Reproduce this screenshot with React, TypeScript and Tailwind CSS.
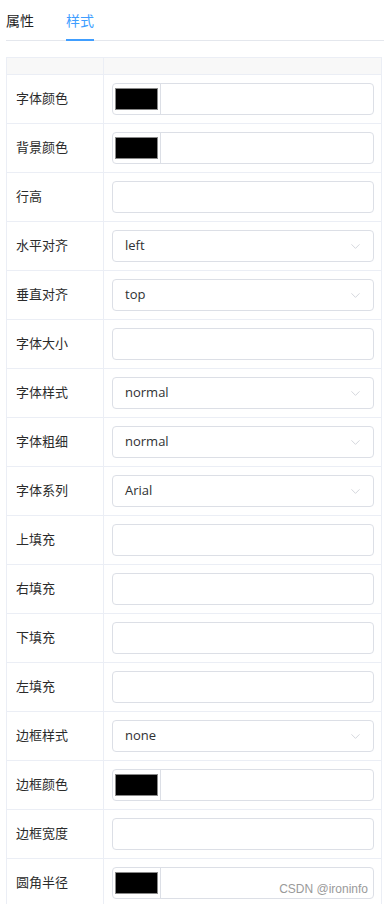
import { ChevronDown } from 'lucide-react'

// ─── Types ────────────────────────────────────────────────────────────────────

type Field =
  | { label: string; kind: 'color' }
  | { label: string; kind: 'text' }
  | { label: string; kind: 'select'; value: string }

// ─── Field definitions ────────────────────────────────────────────────────────

const FIELDS: Field[] = [
  { label: '字体颜色', kind: 'color' },
  { label: '背景颜色', kind: 'color' },
  { label: '行高', kind: 'text' },
  { label: '水平对齐', kind: 'select', value: 'left' },
  { label: '垂直对齐', kind: 'select', value: 'top' },
  { label: '字体大小', kind: 'text' },
  { label: '字体样式', kind: 'select', value: 'normal' },
  { label: '字体粗细', kind: 'select', value: 'normal' },
  { label: '字体系列', kind: 'select', value: 'Arial' },
  { label: '上填充', kind: 'text' },
  { label: '右填充', kind: 'text' },
  { label: '下填充', kind: 'text' },
  { label: '左填充', kind: 'text' },
  { label: '边框样式', kind: 'select', value: 'none' },
  { label: '边框颜色', kind: 'color' },
  { label: '边框宽度', kind: 'text' },
  { label: '圆角半径', kind: 'color' },
]

const FONT = { fontFamily: '"Open Sans", "Noto Sans CJK SC", sans-serif' }

// ─── Inputs ───────────────────────────────────────────────────────────────────

function FieldInput({ field }: { field: Field }) {
  const box = 'h-8 w-full rounded-[4px] border border-[#dcdfe6] bg-white'

  if (field.kind === 'color') {
    return (
      <div className={`${box} flex items-center`}>
        <div className="ml-[2px] h-[22px] w-[43px] border border-[#888] bg-black" />
        <div className="ml-[2px] h-full w-px bg-[#dcdfe6]" />
      </div>
    )
  }

  if (field.kind === 'select') {
    return (
      <div className={`${box} flex items-center justify-between pl-3 pr-[10px]`}>
        <span className="text-[13px] text-[#303133]">{field.value}</span>
        <ChevronDown size={15} strokeWidth={1.1} className="text-[#c0c4cc]" />
      </div>
    )
  }

  return <div className={box} />
}

// ─── App ──────────────────────────────────────────────────────────────────────

export default function App() {
  return (
    <div className="relative h-[904px] w-[384px] overflow-hidden bg-white" style={FONT}>
      {/* Tabs */}
      <div className="ml-[6px] flex h-[41px] gap-8 border-b border-[#e4e7ed] text-[14px]">
        <div className="flex items-center text-[#222]">属性</div>
        <div className="relative flex items-center text-[#409eff]">
          样式
          <div className="absolute right-0 bottom-[-1px] left-0 h-[2px] bg-[#409eff]" />
        </div>
      </div>

      {/* Table */}
      <div className="mt-4 ml-[6px] w-[376px] border border-[#ebeef5]">
        <div className="grid h-[17px] grid-cols-[97px_1fr] border-b border-[#ebeef5] bg-[#f8f8f8]">
          <div className="border-r border-[#ebeef5]" />
          <div />
        </div>
        {FIELDS.map((f) => (
          <div key={f.label} className="grid h-[49px] grid-cols-[97px_1fr] border-b border-[#ebeef5]">
            <div className="flex items-center border-r border-[#ebeef5] pl-[9px] text-[13px] text-[#2b2b2b]">
              {f.label}
            </div>
            <div className="flex items-center pr-[7px] pl-2">
              <FieldInput field={f} />
            </div>
          </div>
        ))}
      </div>

      {/* Watermark */}
      <div className="absolute right-[16px] bottom-[6px] text-[12px] text-[#9a9a9a]" style={{ fontFamily: '"Liberation Sans", sans-serif' }}>
        CSDN @ironinfo
      </div>
    </div>
  )
}
